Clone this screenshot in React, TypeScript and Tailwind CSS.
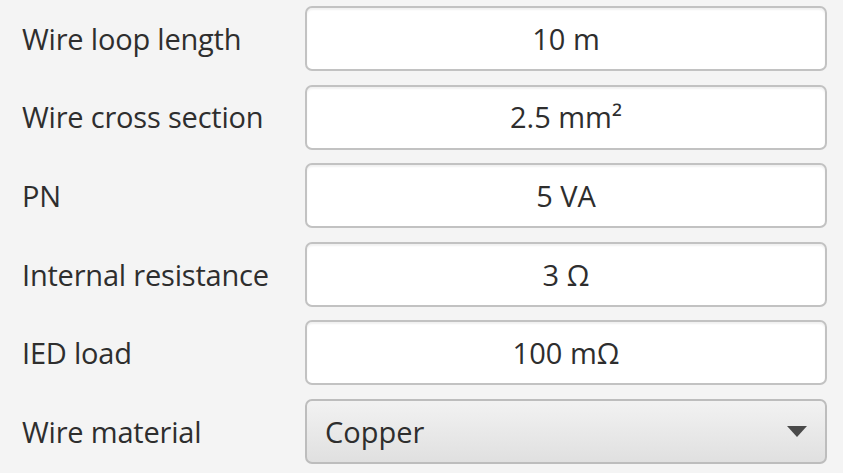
const ROWS = [
  { label: 'Wire loop length', value: '10 m' },
  { label: 'Wire cross section', value: '2.5 mm²' },
  { label: 'PN', value: '5 VA' },
  { label: 'Internal resistance', value: '3 Ω' },
  { label: 'IED load', value: '100 mΩ' },
]

export default function App() {
  return (
    <div className="h-[473px] w-[843px] bg-[#f4f4f4] font-['Open_Sans',sans-serif] text-[29px] text-[#2e2e2e]">
      <div className="grid grid-cols-[283px_522px] gap-y-[13.6px] pl-[22px] pt-[6px]">
        {ROWS.map((row) => (
          <div key={row.label} className="contents">
            <div className="flex h-[65px] items-center tracking-[-0.2px]">{row.label}</div>
            <div className="flex h-[65px] items-center justify-center rounded-[7px] border-2 border-[#c2c2c2] bg-white shadow-[inset_0_2px_2px_rgba(0,0,0,0.06)]">
              {row.value}
            </div>
          </div>
        ))}
        <div className="flex h-[65px] items-center tracking-[-0.2px]">Wire material</div>
        <div className="flex h-[65px] items-center justify-between rounded-[7px] border-2 border-[#bdbdbd] bg-gradient-to-b from-[#f2f2f2] to-[#e0e0e0] pl-[18px] pr-[18px]">
          <span>Copper</span>
          <svg width="20" height="11" viewBox="0 0 20 11" className="fill-[#4a4a4a]">
            <polygon points="0,0 20,0 10,11" />
          </svg>
        </div>
      </div>
    </div>
  )
}
